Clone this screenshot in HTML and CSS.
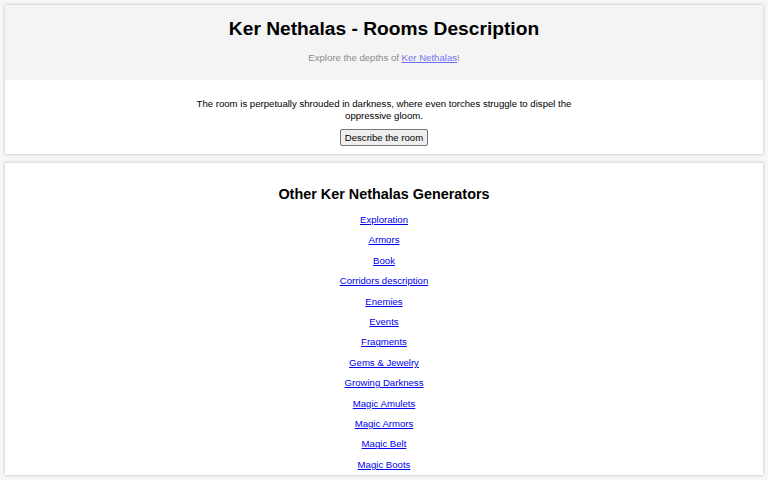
FILE: index.html
```html
<!DOCTYPE html>
<html lang="en">
<head>
<meta charset="utf-8">
<title>Ker Nethalas - Rooms Description</title>
<link rel="stylesheet" href="styles.css">
</head>
<body>
<div class="card main-card">
  <header class="page-header">
    <h1 class="title">Ker Nethalas - Rooms Description</h1>
    <p class="subtitle">Explore the depths of <a href="#">Ker Nethalas</a>!</p>
  </header>
  <section class="generator">
    <p class="result">The room is perpetually shrouded in darkness, where even torches struggle to dispel the oppressive gloom.</p>
    <button class="gen-btn" type="button">Describe the room</button>
  </section>
</div>
<div class="card other-card">
  <h2 class="other-title">Other Ker Nethalas Generators</h2>
  <ul class="links">
    <li><a href="#">Exploration</a></li>
    <li><a href="#">Armors</a></li>
    <li><a href="#">Book</a></li>
    <li><a href="#">Corridors description</a></li>
    <li><a href="#">Enemies</a></li>
    <li><a href="#">Events</a></li>
    <li><a href="#">Fragments</a></li>
    <li><a href="#">Gems &amp; Jewelry</a></li>
    <li><a href="#">Growing Darkness</a></li>
    <li><a href="#">Magic Amulets</a></li>
    <li><a href="#">Magic Armors</a></li>
    <li><a href="#">Magic Belt</a></li>
    <li><a href="#">Magic Boots</a></li>
  </ul>
</div>
</body>
</html>
```

FILE: styles.css
```css
html, body {
  margin: 0;
  padding: 0;
}
body {
  background: #f6f6f6;
  font-family: "Liberation Sans", Arial, sans-serif;
  color: #111;
  padding: 5px;
}
.card {
  background: #fff;
  box-shadow: 0 0 3px rgba(0, 0, 0, 0.25);
}
.page-header {
  background: #f4f4f4;
  padding: 12px 10px 16px;
  text-align: center;
}
.title {
  margin: 0;
  font-size: 19.2px;
  line-height: 24px;
  font-weight: bold;
  color: #000;
}
.subtitle {
  margin: 11px 0 0;
  font-size: 9.6px;
  line-height: 12px;
  color: #333;
  opacity: 0.55;
}
.subtitle a {
  color: #0000ee;
}
.generator {
  padding: 18px 10px 8px;
  text-align: center;
}
.result {
  max-width: 384px;
  margin: 0 auto;
  font-size: 9.6px;
  line-height: 11.5px;
  color: #000;
}
.gen-btn {
  margin-top: 8px;
  font-family: "Liberation Sans", Arial, sans-serif;
  font-size: 9.6px;
  line-height: 11px;
  padding: 1px 4px;
  height: 17px;
  border: 1px solid #767676;
  border-radius: 2px;
  background: #efefef;
  color: #000;
}
.other-card {
  margin-top: 9px;
  padding: 23px 10px 0;
  text-align: center;
}
.other-title {
  margin: 0 0 7px;
  font-size: 14.4px;
  line-height: 17px;
  font-weight: bold;
  color: #000;
}
.links {
  list-style: none;
  margin: 0;
  padding: 0;
}
.links li {
  font-size: 9.6px;
  line-height: 20.4px;
}
.links a {
  color: #0000ee;
}
```
